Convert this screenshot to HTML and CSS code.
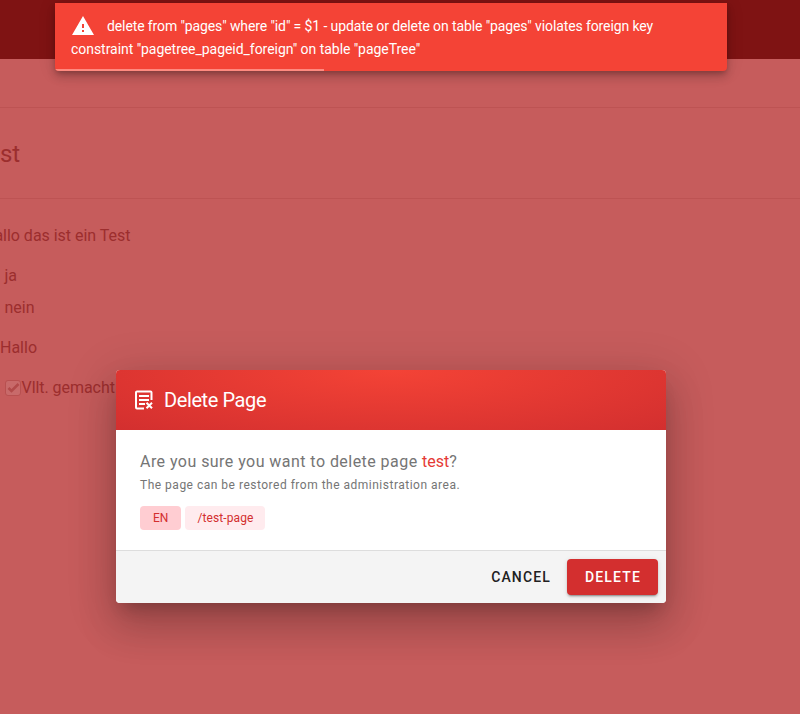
FILE: index.html
```html
<!DOCTYPE html>
<html lang="en">
<head>
<meta charset="utf-8">
<title>Delete Page</title>
<link rel="stylesheet" href="styles.css">
</head>
<body>
<div class="page">
  <header class="topbar"></header>
  <div class="crumbs"></div>
  <div class="title-row"><h1 class="title">Test</h1></div>
  <main class="content">
    <p class="intro">Hallo das ist ein Test</p>
    <ul class="list">
      <li>ja</li>
      <li>nein</li>
    </ul>
    <p class="hallo">Hallo</p>
    <label class="task"><span class="check"><svg viewBox="0 0 16 16" width="16" height="16"><path d="M3.500 8l3 3L13.500 4" fill="none" stroke="#b24a4a" stroke-width="2.600"/></svg></span><span class="task-text">Vllt. gemacht</span></label>
  </main>
</div>

<div class="snackbar">
  <div class="snack-text"><span class="snack-line"><svg class="warn" viewBox="0 0 24 24" width="24" height="24"><path fill="#fff" d="M1 21h22L12 2 1 21zm12-3h-2v-2h2v2zm0-4h-2v-4h2v4z"/></svg>delete from "pages" where "id" = $1 - update or delete on table "pages" violates foreign key</span> <span class="snack-line snack-line-2">constraint "pagetree_pageid_foreign" on table "pageTree"</span></div>
  <div class="snack-progress"></div>
</div>

<div class="overlay">
  <section class="dialog">
    <div class="dialog-head">
      <svg class="head-icon" viewBox="0 0 20 20" width="20" height="20"><path fill="none" stroke="#fff" stroke-width="2" d="M10 18.500H3a1 1 0 0 1-1-1V2.500a1 1 0 0 1 1-1h13.500a1 1 0 0 1 1 1V10"/><path fill="#fff" d="M5 5h10v2H5zM5 9h10v2H5zM5 13h6v2H5z"/><path fill="none" stroke="#fff" stroke-width="2" d="M12.500 12.800l5.500 5.500M18 12.800l-5.500 5.500"/></svg>
      <span class="head-title">Delete Page</span>
    </div>
    <div class="dialog-body">
      <div class="question">Are you sure you want to delete page <span class="name">test</span>?</div>
      <div class="hint">The page can be restored from the administration area.</div>
      <div class="chips">
        <span class="chip chip-locale">EN</span>
        <span class="chip chip-path">/test-page</span>
      </div>
    </div>
    <div class="dialog-actions">
      <button class="btn btn-text">Cancel</button>
      <button class="btn btn-delete">Delete</button>
    </div>
  </section>
</div>
</body>
</html>
```
FILE: styles.css
```css
* { box-sizing: border-box; }
html, body { margin: 0; padding: 0; height: 100%; overflow: hidden; }
body { position: relative; width: 800px; height: 714px; background: #c65c5c; font-family: Roboto, "Liberation Sans", sans-serif; }

.page { color: #9c2e2e; height: 714px; }
.topbar { height: 59px; background: #7f1313; }
.crumbs { height: 49px; border-bottom: 1px solid #bd5353; }
.title-row { height: 91px; border-bottom: 1px solid #bd5353; display: flex; align-items: center; padding-top: 2px; }
.title { margin: 0 0 0 -26px; font-size: 24px; font-weight: 400; line-height: 32px; }
.content { margin-left: -12px; padding-top: 25px; font-size: 16px; line-height: 24px; }
.intro { margin: 0 0 16px -5px; letter-spacing: -.02px; }
.list { list-style: none; margin: 0 0 16px; padding: 0 0 0 16.500px; }
.list li { margin-bottom: 8px; }
.list li:last-child { margin-bottom: 0; }
.hallo { margin: 0 0 16px 12px; }
.task { display: flex; align-items: center; margin-left: 17px; }
.task-text { margin-left: 0.500px; letter-spacing: -.05px; }
.check { width: 16px; height: 16px; border: 1px solid #b85050; border-radius: 3px; display: flex; background: #c86a6a; }
.check svg { margin: -1px; }

.snackbar { position: absolute; left: 55px; top: 3px; width: 672px; height: 68px; background: #f44336; border-radius: 0 0 4px 4px; color: #fff; box-shadow: 0 3px 5px -1px rgba(0,0,0,.2), 0 6px 10px rgba(0,0,0,.14), 0 1px 18px rgba(0,0,0,.12); overflow: hidden; }
.snack-text { padding: 12px 16px; font-size: 14px; line-height: 23px; letter-spacing: -.11px; }
.snack-line-2 { display: block; letter-spacing: -.04px; }
.warn { vertical-align: middle; margin: -3px 12px 0 0; }
.snack-progress { position: absolute; left: 0; bottom: 0; width: 269px; height: 2px; background: #ff8a80; }

.overlay { position: absolute; inset: 0; padding: 370px 134px 0 116px; }
.dialog { width: 550px; border-radius: 4px; overflow: hidden; background: #fff; box-shadow: 0 11px 15px -7px rgba(0,0,0,.2), 0 24px 38px 3px rgba(0,0,0,.14), 0 9px 46px 8px rgba(0,0,0,.12); }
.dialog-head { height: 60px; display: flex; align-items: center; gap: 10px; padding: 0 18px; color: #fff; font-size: 20px; background: radial-gradient(ellipse at top, #f44336, #d32f2f); }
.head-title { letter-spacing: -.4px; }
.head-icon { flex: none; }
.dialog-body { height: 120px; padding: 20px 24px 0; color: #757575; }
.question { font-size: 16px; line-height: 24px; letter-spacing: .45px; }
.name { color: #e53935; letter-spacing: 0; }
.hint { font-size: 12px; line-height: 20px; letter-spacing: .5px; padding-top: 1px; }
.chips { display: flex; gap: 4px; margin-top: 11px; }
.chip { height: 24px; border-radius: 4px; font-size: 12px; line-height: 24px; color: #d32f2f; padding: 0 12px; }
.chip-locale { background: #ffcdd2; padding: 0 13px; }
.chip-path { background: #ffebee; letter-spacing: .1px; }
.dialog-actions { height: 53px; background: #f4f4f4; border-top: 1px solid #ddd; display: flex; justify-content: flex-end; align-items: center; padding: 0 8px; }
.btn { height: 36px; border: 0; border-radius: 4px; padding: 0 16px; background: none; font: 500 14px Roboto, "Liberation Sans", sans-serif; letter-spacing: 1.15px; text-transform: uppercase; color: #212121; }
.btn-delete { background: #d32f2f; color: #fff; padding: 0 17px 0 18px; box-shadow: 0 3px 1px -2px rgba(0,0,0,.2), 0 2px 2px rgba(0,0,0,.14), 0 1px 5px rgba(0,0,0,.12); }
```
